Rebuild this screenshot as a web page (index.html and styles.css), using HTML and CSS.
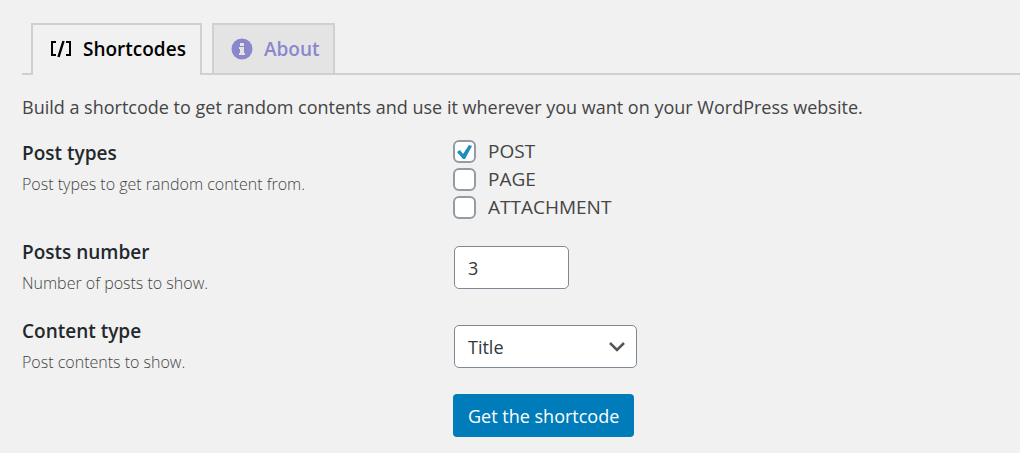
FILE: index.html
```html
<!DOCTYPE html>
<html lang="en">
<head>
    <meta charset="UTF-8">
    <title>Random content shortcodes</title>
    <link rel="stylesheet" href="styles.css">
</head>
<body>
    <nav class="tabs">
        <a href="#shortcodes" class="tab tab-active">
            <svg class="icon-code" viewBox="0 0 22 20" aria-hidden="true">
                <path d="M6 3H2v13h4M16 3h4v13h-4" fill="none" stroke="currentColor" stroke-width="2"/>
                <path d="M13.500 2 8.500 18" fill="none" stroke="currentColor" stroke-width="2.500"/>
            </svg>
            Shortcodes
        </a>
        <a href="#about" class="tab">
            <svg class="icon-info" viewBox="0 0 22 22" aria-hidden="true">
                <circle cx="11" cy="11" r="10.500" fill="currentColor"/>
                <path d="M9 5h4v3H9zM8 9h5v6h1v2H8v-2h1v-4H8z" fill="#e4e4e4"/>
            </svg>
            About
        </a>
    </nav>

    <main id="shortcodes">
        <p class="intro">Build a shortcode to get random contents and use it wherever you want on your WordPress website.</p>

        <form class="form">
            <div class="row" role="group" aria-labelledby="types-title">
                <div class="info">
                    <span class="title" id="types-title">Post types</span>
                    <p class="description">Post types to get random content from.</p>
                </div>
                <div class="checks">
                    <label class="check"><input type="checkbox" checked>POST</label>
                    <label class="check"><input type="checkbox">PAGE</label>
                    <label class="check"><input type="checkbox">ATTACHMENT</label>
                </div>
            </div>

            <div class="row">
                <div class="info">
                    <label class="title" for="number">Posts number</label>
                    <p class="description">Number of posts to show.</p>
                </div>
                <div class="field">
                    <input type="number" id="number" class="control number" value="3">
                </div>
            </div>

            <div class="row">
                <div class="info">
                    <label class="title" for="content">Content type</label>
                    <p class="description">Post contents to show.</p>
                </div>
                <div class="field">
                    <select id="content" class="control select">
                        <option>Title</option>
                    </select>
                </div>
            </div>

            <div class="row">
                <button type="button" class="submit">Get the shortcode</button>
            </div>
        </form>
    </main>
</body>
</html>
```
FILE: styles.css
```css
* {
    box-sizing: border-box;
}
body {
    margin: 0;
    padding: 23px 0 16px 22px;
    background: #f1f1f1;
    color: #444;
    font-family: "Open Sans", "Noto Sans", sans-serif;
    font-size: 18px;
    line-height: 28px;
}
p {
    margin: 0;
}

/* tabs */
.tabs {
    display: flex;
    gap: 10px;
    padding-left: 9px;
    border-bottom: 2px solid #d0d0d0;
}
.tab {
    display: flex;
    align-items: center;
    height: 50px;
    padding: 0 14px 0 17px;
    border: 2px solid #d0d0d0;
    border-bottom: 0;
    background: #e4e4e4;
    color: #8b87cc;
    font-size: 19px;
    font-weight: 600;
    text-decoration: none;
}
.tab-active {
    height: 52px;
    margin-bottom: -2px;
    padding-bottom: 2px;
    background: #f1f1f1;
    color: #000;
}
.icon-code {
    width: 22px;
    height: 20px;
    margin-right: 11px;
}
.icon-info {
    width: 22px;
    height: 22px;
    margin-right: 11px;
}

/* form */
.intro {
    margin: 18px 0 16px;
}
.form {
    display: grid;
    gap: 15px;
}
.row {
    display: grid;
    grid-template-columns: 431px 1fr;
}
.info {
    padding: 2px 0 7px;
}
.title {
    display: block;
    color: #23282d;
    font-size: 19px;
    font-weight: 600;
}
.description {
    margin-top: 7px;
    font-size: 16px;
    font-weight: 300;
    line-height: 20px;
}
.check {
    display: flex;
    align-items: center;
    gap: 12px;
    font-size: 19px;
}
.check input {
    appearance: none;
    width: 23px;
    height: 23px;
    margin: 0;
    border: 2px solid #939ca4;
    border-radius: 6px;
    background: #fff;
}
.check input:checked {
    background: #fff url("data:image/svg+xml,%3Csvg xmlns='http://www.w3.org/2000/svg' viewBox='0 0 19 19'%3E%3Cpath d='m2 10 3-2 3 4 6-9 3 1-7 13H8z' fill='%231e8cbe'/%3E%3C/svg%3E") center / 19px no-repeat;
}
.field {
    padding: 10px 0 0 1px;
}
.control {
    display: block;
    height: 43px;
    padding: 0 13px;
    border: 1px solid #7e8993;
    border-radius: 5px;
    background: #fff;
    color: #32373c;
    font: inherit;
}
.number {
    width: 115px;
    appearance: textfield;
}
.select {
    width: 183px;
    appearance: none;
    background: #fff url("data:image/svg+xml,%3Csvg xmlns='http://www.w3.org/2000/svg' viewBox='0 0 18 12'%3E%3Cpath d='m2 2 7 7 7-7' fill='none' stroke='%23555' stroke-width='2.500'/%3E%3C/svg%3E") right 10px center / 18px 12px no-repeat;
}
.submit {
    grid-column: 2;
    justify-self: start;
    height: 43px;
    padding: 0 15px;
    border: 0;
    border-radius: 4px;
    background: #007cba;
    color: #fff;
    font: inherit;
}
```
